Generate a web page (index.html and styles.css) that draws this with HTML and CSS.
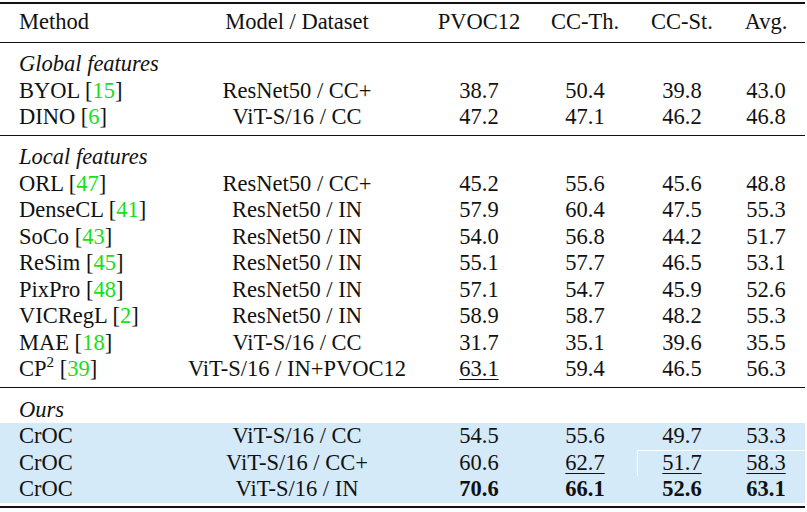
FILE: index.html
```html
<!DOCTYPE html>
<html>
<head>
<meta charset="utf-8">
<link rel="stylesheet" href="styles.css">
</head>
<body>
<div class="table">
  <div class="head">
    <div class="row">
      <div class="c1">Method</div><div class="c">Model / Dataset</div><div class="c">PVOC12</div><div class="c">CC-Th.</div><div class="c">CC-St.</div><div class="c">Avg.</div>
    </div>
  </div>
  <div class="section">
    <div class="row"><div class="c1 group">Global features</div></div>
    <div class="row"><div class="c1">BYOL [<span class="cite">15</span>]</div><div class="c">ResNet50 / CC+</div><div class="c">38.7</div><div class="c">50.4</div><div class="c">39.8</div><div class="c">43.0</div></div>
    <div class="row"><div class="c1">DINO [<span class="cite">6</span>]</div><div class="c">ViT-S/16 / CC</div><div class="c">47.2</div><div class="c">47.1</div><div class="c">46.2</div><div class="c">46.8</div></div>
  </div>
  <div class="section">
    <div class="row"><div class="c1 group">Local features</div></div>
    <div class="row"><div class="c1">ORL [<span class="cite">47</span>]</div><div class="c">ResNet50 / CC+</div><div class="c">45.2</div><div class="c">55.6</div><div class="c">45.6</div><div class="c">48.8</div></div>
    <div class="row"><div class="c1">DenseCL [<span class="cite">41</span>]</div><div class="c">ResNet50 / IN</div><div class="c">57.9</div><div class="c">60.4</div><div class="c">47.5</div><div class="c">55.3</div></div>
    <div class="row"><div class="c1">SoCo [<span class="cite">43</span>]</div><div class="c">ResNet50 / IN</div><div class="c">54.0</div><div class="c">56.8</div><div class="c">44.2</div><div class="c">51.7</div></div>
    <div class="row"><div class="c1">ReSim [<span class="cite">45</span>]</div><div class="c">ResNet50 / IN</div><div class="c">55.1</div><div class="c">57.7</div><div class="c">46.5</div><div class="c">53.1</div></div>
    <div class="row"><div class="c1">PixPro [<span class="cite">48</span>]</div><div class="c">ResNet50 / IN</div><div class="c">57.1</div><div class="c">54.7</div><div class="c">45.9</div><div class="c">52.6</div></div>
    <div class="row"><div class="c1">VICRegL [<span class="cite">2</span>]</div><div class="c">ResNet50 / IN</div><div class="c">58.9</div><div class="c">58.7</div><div class="c">48.2</div><div class="c">55.3</div></div>
    <div class="row"><div class="c1">MAE [<span class="cite">18</span>]</div><div class="c">ViT-S/16 / CC</div><div class="c">31.7</div><div class="c">35.1</div><div class="c">39.6</div><div class="c">35.5</div></div>
    <div class="row"><div class="c1">CP<sup class="sup">2</sup> [<span class="cite">39</span>]</div><div class="c">ViT-S/16 / IN+PVOC12</div><div class="c"><span class="ul">63.1</span></div><div class="c">59.4</div><div class="c">46.5</div><div class="c">56.3</div></div>
  </div>
  <div class="section last">
    <div class="row"><div class="c1 group">Ours</div></div>
    <div class="row hl"><div class="c1">CrOC</div><div class="c">ViT-S/16 / CC</div><div class="c">54.5</div><div class="c">55.6</div><div class="c">49.7</div><div class="c">53.3</div></div>
    <div class="row hl"><div class="c1">CrOC</div><div class="c">ViT-S/16 / CC+</div><div class="c">60.6</div><div class="c"><span class="ul">62.7</span></div><div class="c seam-l"><span class="ul">51.7</span></div><div class="c seam"><span class="ul">58.3</span></div></div>
    <div class="row hl"><div class="c1">CrOC</div><div class="c">ViT-S/16 / IN</div><div class="c b">70.6</div><div class="c b">66.1</div><div class="c b">52.6</div><div class="c b">63.1</div></div>
  </div>
</div>
</body>
</html>
```

FILE: styles.css
```css
html, body {
  margin: 0;
  padding: 0;
  background: #fff;
}

body {
  font-family: "Liberation Serif", "Times New Roman", serif;
  font-size: 22.5px;
  color: #111;
  padding-top: 2px;
}

.table {
  width: 805px;
  border-top: 2px solid #111;
  border-bottom: 2.5px solid #111;
}

.head {
  padding: 4.75px 0 6.75px;
}

.section {
  border-top: 1.2px solid #111;
  padding: 8px 0 4.5px;
}

.section.last {
  padding: 8.5px 0 3px;
}

.row {
  display: grid;
  grid-template-columns: 169px 256px 108px 104px 90px 78px;
  height: 26.5px;
  align-items: center;
  line-height: 26.5px;
  white-space: nowrap;
}

.c1 {
  padding-left: 19px;
}

.c {
  text-align: center;
}

.group {
  font-style: italic;
}

.cite {
  color: #16e016;
}

.sup {
  font-size: 15px;
  line-height: 0;
  vertical-align: 9px;
}

.ul {
  text-decoration: underline;
  text-decoration-thickness: 1px;
  text-underline-offset: 3px;
}

.b {
  font-weight: bold;
}

.hl {
  background: #d5eaf9;
}

.seam {
  box-shadow: inset 0 1px 0 #fff;
}

.seam-l {
  box-shadow: inset 0 1px 0 #fff, inset 1px 0 0 #fff;
}
```
